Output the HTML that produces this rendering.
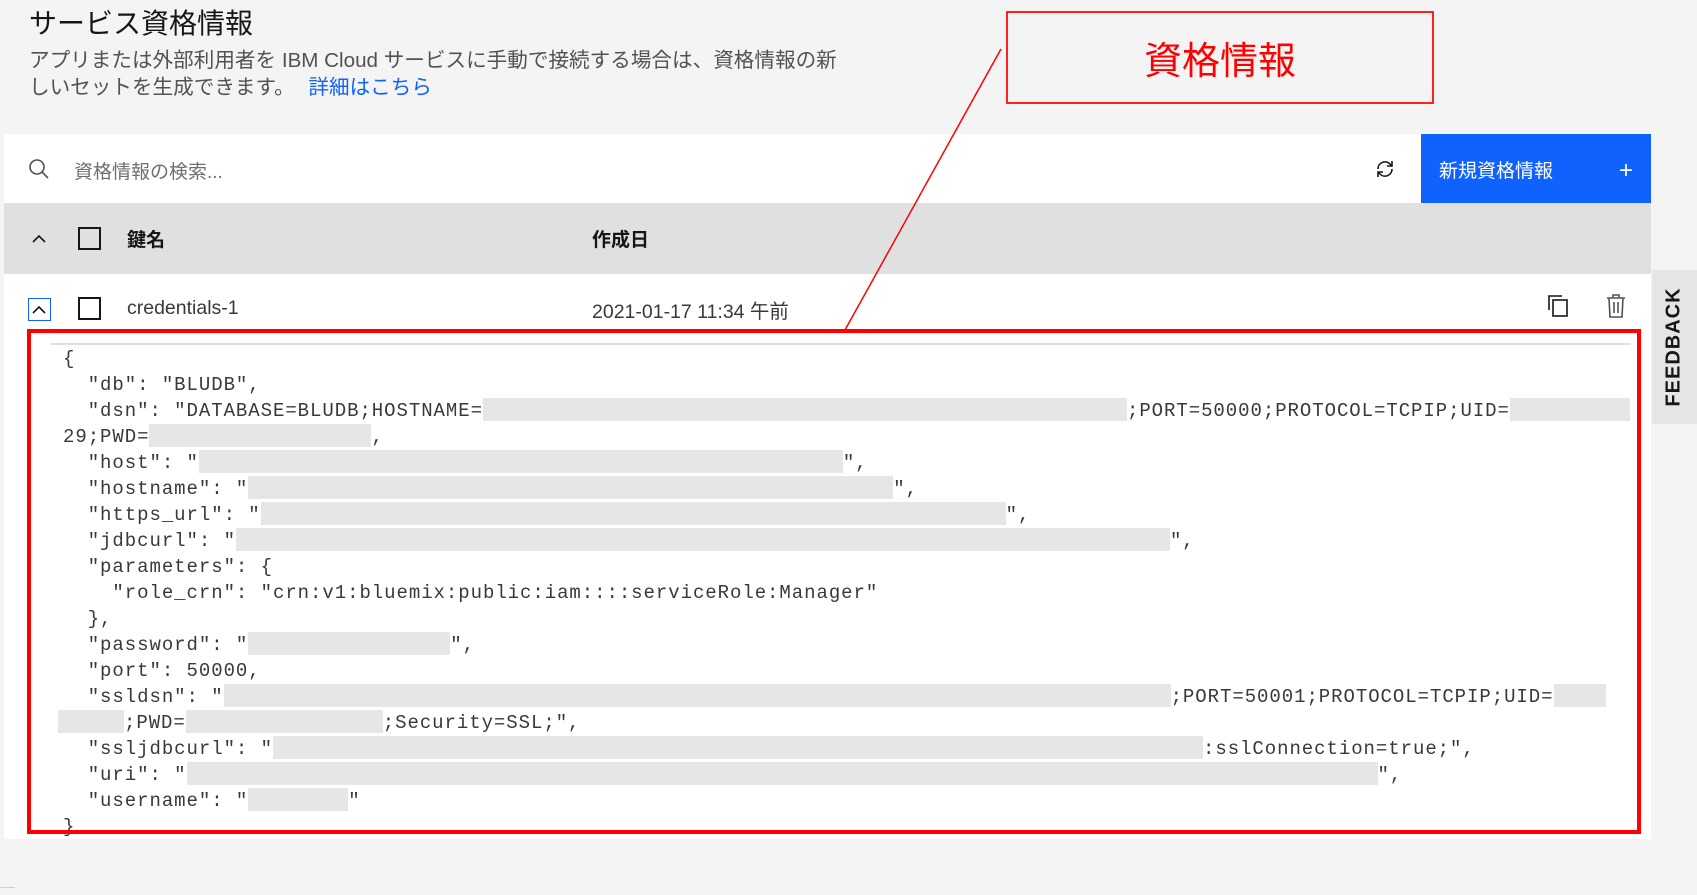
<!DOCTYPE html>
<html><head><meta charset="utf-8">
<style>
*{margin:0;padding:0;box-sizing:border-box}
body{width:1697px;height:895px;background:#f4f4f4;position:relative;overflow:hidden;font-family:"Liberation Sans","Noto Sans CJK JP",sans-serif;color:#161616}
.a{position:absolute}
.code{position:absolute;font-family:"Liberation Mono","Noto Sans CJK JP",monospace;font-size:19px;letter-spacing:0.95px;color:#393939;white-space:pre;line-height:26px;height:26px}
.g{display:inline-block;background:#e6e6e6;height:23px;vertical-align:-5px}
</style></head><body>
<div class="a" style="left:29px;top:2px;font-size:28px;color:#161616">サービス資格情報</div>
<div class="a" style="left:29px;top:47px;font-size:20.6px;line-height:27px;color:#525252;width:880px">アプリまたは外部利用者を IBM Cloud サービスに手動で接続する場合は、資格情報の新<br>しいセットを生成できます。 <span style="color:#0f62fe;margin-left:8px">詳細はこちら</span></div>

<div class="a" style="left:4px;top:134px;width:1647px;height:705px;background:#fff"></div>
<svg class="a" style="left:28px;top:158px" width="22" height="22" viewBox="0 0 22 22"><circle cx="9" cy="9" r="7" fill="none" stroke="#525252" stroke-width="1.6"/><line x1="14" y1="14" x2="20" y2="20" stroke="#525252" stroke-width="1.6"/></svg>
<div class="a" style="left:74px;top:157px;font-size:19px;color:#6f6f6f">資格情報の検索...</div>
<svg class="a" style="left:1374px;top:158px" width="22" height="22" viewBox="0 0 22 22" fill="none" stroke="#161616" stroke-width="1.6"><path d="M4 11a7 7 0 0 1 12-5l2 2"/><path d="M18 3v5h-5"/><path d="M18 11a7 7 0 0 1-12 5l-2-2"/><path d="M4 19v-5h5"/></svg>
<div class="a" style="left:1421px;top:134px;width:230px;height:69px;background:#0f62fe"></div>
<div class="a" style="left:1439px;top:156px;font-size:19px;color:#fff">新規資格情報</div>
<div class="a" style="left:1619px;top:158px;font-size:24px;line-height:26px;color:#fff">+</div>

<div class="a" style="left:4px;top:203px;width:1647px;height:71px;background:#e0e0e0"></div>
<svg class="a" style="left:31px;top:233px" width="16" height="12" viewBox="0 0 16 12"><path d="M2 9l6-6 6 6" fill="none" stroke="#161616" stroke-width="1.6"/></svg>
<div class="a" style="left:78px;top:227px;width:23px;height:23px;border:2px solid #161616"></div>
<div class="a" style="left:127px;top:225px;font-size:19px;font-weight:bold">鍵名</div>
<div class="a" style="left:592px;top:225px;font-size:19px;font-weight:bold">作成日</div>

<div class="a" style="left:28px;top:298px;width:23px;height:23px;border:1.5px solid #0f62fe"></div>
<svg class="a" style="left:31px;top:304px" width="16" height="12" viewBox="0 0 16 12"><path d="M2 9l6-6 6 6" fill="none" stroke="#161616" stroke-width="1.6"/></svg>
<div class="a" style="left:78px;top:297px;width:23px;height:23px;border:2px solid #161616"></div>
<div class="a" style="left:127px;top:297px;font-size:19.5px;color:#393939">credentials-1</div>
<div class="a" style="left:592px;top:295px;font-size:19.5px;color:#393939">2021-01-17 11:34 午前</div>
<svg class="a" style="left:1546px;top:294px" width="24" height="24" viewBox="0 0 24 24" fill="none" stroke="#161616" stroke-width="1.6"><path d="M3 16V2h13"/><rect x="7" y="6" width="14" height="16"/></svg>
<svg class="a" style="left:1604px;top:293px" width="24" height="26" viewBox="0 0 24 26" fill="none" stroke="#525252" stroke-width="1.6"><path d="M3 5h18M9 5V2h6v3M5 5l1 19h12l1-19M10 9v11M14 9v11"/></svg>

<div class="a" style="left:51px;top:343px;width:1580px;height:2px;background:#e0e0e0"></div>

<div style="position:absolute;left:0;top:0;width:1634px;height:895px;overflow:hidden">
<div class="code" style="left:63px;top:346px">{</div>
<div class="code" style="left:63px;top:372px">  "db": "BLUDB",</div>
<div class="code" style="left:63px;top:398px">  "dsn": "DATABASE=BLUDB;HOSTNAME=<span class="g" style="width:644px"></span>;PORT=50000;PROTOCOL=TCPIP;UID=<span class="g" style="width:120px"></span></div>
<div class="code" style="left:63px;top:424px">29;PWD=<span class="g" style="width:222px"></span>,</div>
<div class="code" style="left:63px;top:450px">  "host": "<span class="g" style="width:644px"></span>",</div>
<div class="code" style="left:63px;top:476px">  "hostname": "<span class="g" style="width:645px"></span>",</div>
<div class="code" style="left:63px;top:502px">  "https_url": "<span class="g" style="width:745px"></span>",</div>
<div class="code" style="left:63px;top:528px">  "jdbcurl": "<span class="g" style="width:934px"></span>",</div>
<div class="code" style="left:63px;top:554px">  "parameters": {</div>
<div class="code" style="left:63px;top:580px">    "role_crn": "crn:v1:bluemix:public:iam::::serviceRole:Manager"</div>
<div class="code" style="left:63px;top:606px">  },</div>
<div class="code" style="left:63px;top:632px">  "password": "<span class="g" style="width:202px"></span>",</div>
<div class="code" style="left:63px;top:658px">  "port": 50000,</div>
<div class="code" style="left:63px;top:684px">  "ssldsn": "<span class="g" style="width:947px"></span>;PORT=50001;PROTOCOL=TCPIP;UID=<span class="g" style="width:52px"></span></div>
<div class="code" style="left:58px;top:710px"><span class="g" style="width:66px"></span>;PWD=<span class="g" style="width:197px"></span>;Security=SSL;",</div>
<div class="code" style="left:63px;top:736px">  "ssljdbcurl": "<span class="g" style="width:930px"></span>:sslConnection=true;",</div>
<div class="code" style="left:63px;top:762px">  "uri": "<span class="g" style="width:1191px"></span>",</div>
<div class="code" style="left:63px;top:788px">  "username": "<span class="g" style="width:100px"></span>"</div>
<div class="code" style="left:63px;top:814px">}</div>
</div>

<div class="a" style="left:27px;top:329px;width:1614px;height:505px;border:4px solid #ff0000"></div>

<div class="a" style="left:1652px;top:270px;width:45px;height:154px;background:#e5e5e5"></div>
<div class="a" style="left:1674px;top:347px;transform:translate(-50%,-50%) rotate(-90deg);font-size:20px;font-weight:bold;letter-spacing:1px;color:#161616;white-space:nowrap">FEEDBACK</div>

<div class="a" style="left:1006px;top:11px;width:428px;height:93px;border:2px solid #ff2020"></div>
<div class="a" style="left:1006px;top:30px;width:428px;text-align:center;font-size:38px;color:#ff0000">資格情報</div>
<svg class="a" style="left:0;top:0" width="1697" height="895"><line x1="1001" y1="49" x2="845" y2="330" stroke="#ff0000" stroke-width="1.5"/></svg>
<div class="a" style="left:0;top:887px;width:15px;height:1px;background:#d0d0d0"></div>
</body></html>
